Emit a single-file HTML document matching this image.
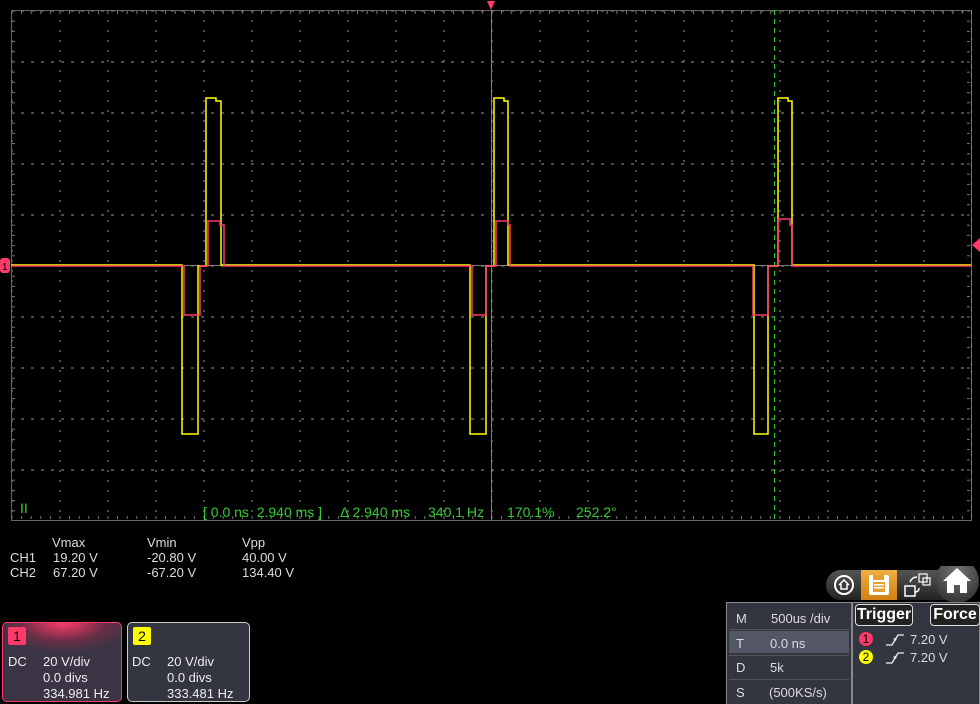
<!DOCTYPE html>
<html><head><meta charset="utf-8"><style>
body{margin:0;width:980px;height:704px;background:#000;overflow:hidden;font-family:"Liberation Sans",sans-serif;position:relative}
.t{position:absolute;color:#ddd;font-size:13px;white-space:nowrap}
.ch{position:absolute;top:622px;width:120px;height:80px;border-radius:5px;background:#333541;border:1px solid #ccc;box-sizing:border-box}
.ch .n{position:absolute;left:5px;top:4px;width:18px;height:18px;font-size:14px;text-align:center;line-height:18px;border-radius:2px}
.ch .t{color:#eee}
</style></head><body>
<svg width="980" height="530" style="position:absolute;left:0;top:0">
<defs>
<pattern id="vd" width="48" height="10" patternUnits="userSpaceOnUse" x="11.5" y="10"><rect x="0" y="0" width="1" height="2" fill="#999"/></pattern>
<pattern id="hd" width="10" height="51" patternUnits="userSpaceOnUse" x="11" y="10.5"><rect x="0" y="0" width="3" height="1" fill="#999"/></pattern>
<pattern id="tx" width="9.6" height="5" patternUnits="userSpaceOnUse" x="11.5" y="10"><rect x="0" y="0" width="1" height="4" fill="#777"/></pattern>
<pattern id="ty" width="5" height="10.2" patternUnits="userSpaceOnUse" x="11" y="10.5"><rect x="0" y="0" width="4" height="1" fill="#777"/></pattern>
</defs>
<rect x="11" y="10" width="960" height="510" fill="url(#vd)"/>
<rect x="11" y="10" width="960" height="510" fill="url(#hd)"/>
<rect x="11" y="11" width="960" height="4" fill="url(#tx)"/>
<rect x="11" y="516" width="960" height="4" fill="url(#tx)"/>
<rect x="12" y="10" width="4" height="510" fill="url(#ty)"/>
<rect x="967" y="10" width="4" height="510" fill="url(#ty)"/>
<rect x="11.5" y="10.5" width="960" height="510" fill="none" stroke="#666" stroke-width="1"/>
<line x1="491.5" y1="10" x2="491.5" y2="520" stroke="#777"/>
<line x1="11" y1="265.5" x2="971" y2="265.5" stroke="#777"/>
<line x1="491.5" y1="10" x2="491.5" y2="520" stroke="#2c2" stroke-dasharray="5,4"/>
<line x1="774.5" y1="10" x2="774.5" y2="520" stroke="#2c2" stroke-dasharray="5,4"/>
<line x1="971.5" y1="10" x2="971.5" y2="520" stroke="#2c2" stroke-dasharray="5,4"/>
<g fill="none" stroke-width="1.5">
<path stroke="#ff0" d="M11 265 H182 V434 H198 V266 H206 V98 H216 V101 H221 V265 H470 V434 H486 V266 H494 V98 H504 V101 H508 V265 H754 V434 H768 V266 H778 V98 H788 V101 H792 V265 H971"/>
<path stroke="#ff3a6a" d="M11 266 H184 V315 H200 V266 H208 V221 H220 V225 H224 V266 H472 V315 H486 V266 H496 V221 H508 V225 H510 V266 H753 V315 H768 V266 H778 V219 H790 V225 H792 V266 H971"/>
</g>
<polygon points="487,1 495,1 491,10" fill="#ff3a6a"/>
<polygon points="980,238 980,252 972,245" fill="#ff3a6a"/>
<rect x="0" y="258" width="10" height="15" rx="3" fill="#ff3a6a"/>
<text x="2" y="270" font-size="10" fill="#000" font-family="Liberation Sans">1</text>
<g font-size="14" fill="#3c3" font-family="Liberation Sans">
<text x="20" y="513">II</text>
<text x="203" y="517" xml:space="preserve">[ 0.0 ns  2.940 ms ]</text>
<text x="340" y="517">Δ 2.940 ms</text>
<text x="428" y="517">340.1 Hz</text>
<text x="507" y="517">170.1%</text>
<text x="576" y="517">252.2°</text>
</g>
</svg>
<div class="t" style="left:52px;top:535px">Vmax</div><div class="t" style="left:147px;top:535px">Vmin</div><div class="t" style="left:242px;top:535px">Vpp</div>
<div class="t" style="left:10px;top:550px">CH1</div><div class="t" style="left:53px;top:550px">19.20 V</div><div class="t" style="left:147px;top:550px">-20.80 V</div><div class="t" style="left:242px;top:550px">40.00 V</div>
<div class="t" style="left:10px;top:565px">CH2</div><div class="t" style="left:53px;top:565px">67.20 V</div><div class="t" style="left:147px;top:565px">-67.20 V</div><div class="t" style="left:242px;top:565px">134.40 V</div>

<div class="ch" style="left:2px;border-color:#ff3a6a;background:radial-gradient(ellipse 70px 30px at 60px 0,#ff3a6a,#6a2e46 60%,#3a3444)"><div class="n" style="background:#ff3a6a;color:#000">1</div>
<div class="t" style="left:5px;top:31px">DC</div><div class="t" style="left:40px;top:31px">20 V/div</div><div class="t" style="left:40px;top:47px">0.0 divs</div><div class="t" style="left:40px;top:63px">334.981 Hz</div></div>
<div class="ch" style="left:127px;width:123px"><div class="n" style="background:#ff0;color:#000">2</div>
<div class="t" style="left:4px;top:31px">DC</div><div class="t" style="left:39px;top:31px">20 V/div</div><div class="t" style="left:39px;top:47px">0.0 divs</div><div class="t" style="left:39px;top:63px">333.481 Hz</div></div>

<div style="position:absolute;left:826px;top:570px;width:140px;height:30px;border-radius:15px 0 0 15px;background:linear-gradient(#555,#222)"></div>
<div style="position:absolute;left:861px;top:570px;width:36px;height:30px;background:linear-gradient(#f0b040,#d08010)"></div>
<svg style="position:absolute;left:826px;top:566px" width="154" height="40">
<defs><radialGradient id="hg" cx="0.5" cy="0.3" r="0.7"><stop offset="0" stop-color="#777"/><stop offset="1" stop-color="#333"/></radialGradient></defs>
<circle cx="18" cy="19" r="9" fill="none" stroke="#fff" stroke-width="2"/>
<path d="M13 19 L18 14 L23 19 M15 18 V23 H21 V18" fill="none" stroke="#fff" stroke-width="1.5"/>
<rect x="43" y="9" width="20" height="20" rx="2" fill="#fff"/><rect x="47" y="16" width="12" height="10" fill="#e9a030"/><rect x="48" y="18" width="10" height="1.5" fill="#fff"/><rect x="48" y="21" width="10" height="1.5" fill="#fff"/><rect x="47" y="9" width="11" height="5" fill="#e9a030"/>
<rect x="79" y="20" width="10" height="10" fill="none" stroke="#fff" stroke-width="1.5"/><rect x="93" y="8" width="8" height="8" fill="none" stroke="#fff" stroke-width="1.2"/><rect x="97" y="12" width="7" height="7" fill="none" stroke="#fff" stroke-width="1.2"/>
<path d="M84 16 Q86 11 91 11 M93 22 Q93 26 89 26" fill="none" stroke="#fff" stroke-width="1.5"/>
<circle cx="131" cy="15" r="22" fill="url(#hg)"/>
<path d="M117 15 L131 2 L145 15 L141 15 L141 27 L134 27 L134 19 L128 19 L128 27 L121 27 L121 15 Z" fill="#fff"/>
</svg>

<div style="position:absolute;left:726px;top:602px;width:126px;height:102px;background:#333541;border:1px solid #888;border-bottom:none;box-sizing:border-box"></div>
<div style="position:absolute;left:729px;top:631px;width:120px;height:22px;background:#535664"></div>
<div style="position:absolute;left:729px;top:629px;width:120px;height:1px;background:#555"></div>
<div style="position:absolute;left:729px;top:655px;width:120px;height:1px;background:#555"></div>
<div style="position:absolute;left:729px;top:679px;width:120px;height:1px;background:#555"></div>
<div class="t" style="left:736px;top:611px">M</div><div class="t" style="left:771px;top:611px">500us /div</div>
<div class="t" style="left:736px;top:636px">T</div><div class="t" style="left:770px;top:636px">0.0 ns</div>
<div class="t" style="left:736px;top:660px">D</div><div class="t" style="left:770px;top:660px">5k</div>
<div class="t" style="left:736px;top:685px">S</div><div class="t" style="left:769px;top:685px">(500KS/s)</div>
<div style="position:absolute;left:852px;top:602px;width:128px;height:102px;background:#333541;border:1px solid #888;border-bottom:none;box-sizing:border-box"></div>
<div style="position:absolute;left:855px;top:604px;width:58px;height:22px;border:1px solid #ddd;border-radius:4px;box-sizing:border-box;background:#222;color:#fff;font-weight:bold;font-size:16px;text-align:center;line-height:20px">Trigger</div>
<div style="position:absolute;left:930px;top:604px;width:50px;height:22px;border:1px solid #ddd;border-radius:4px;box-sizing:border-box;background:#222;color:#fff;font-weight:bold;font-size:16px;text-align:center;line-height:20px">Force</div>
<div style="position:absolute;left:859px;top:632px;width:14px;height:14px;border-radius:7px;background:#ff3a6a;font-size:12px;text-align:center;line-height:14px">1</div>
<div style="position:absolute;left:859px;top:650px;width:14px;height:14px;border-radius:7px;background:#ff0;font-size:12px;text-align:center;line-height:14px">2</div>
<svg style="position:absolute;left:884px;top:631px" width="24" height="36"><path d="M2 14 H8 L14 4 H20 M2 32 H8 L14 22 H20" fill="none" stroke="#eee" stroke-width="1.3"/><path d="M9 8 L13 6 L12 10Z M9 26 L13 24 L12 28Z" fill="#eee"/></svg>
<div class="t" style="left:910px;top:632px">7.20 V</div>
<div class="t" style="left:910px;top:650px">7.20 V</div>
</body></html>
